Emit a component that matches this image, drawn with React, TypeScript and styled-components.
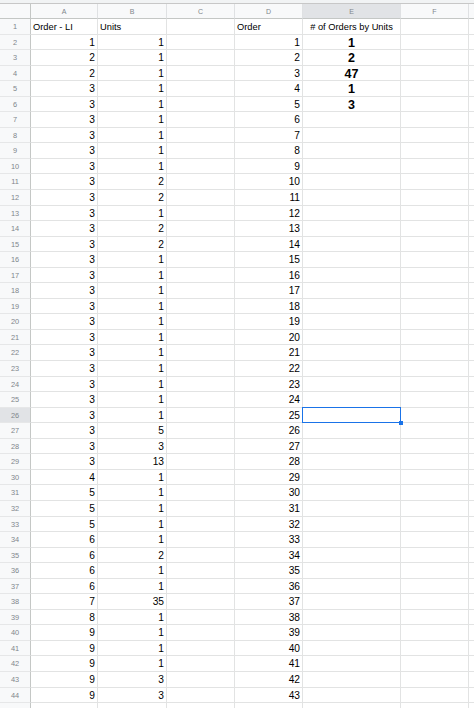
import React from "react";
import styled, { createGlobalStyle, css } from "styled-components";

const ROW_H = 15.56;

const GlobalStyle = createGlobalStyle`
  html, body {
    margin: 0;
    padding: 0;
    background: #ffffff;
    overflow: hidden;
  }
  body {
    font-family: "Liberation Sans", Arial, sans-serif;
  }
`;

const Page = styled.div`
  width: 474px;
  height: 708px;
  overflow: hidden;
  background: #f1f3f4;
  padding-top: 3px;
  box-sizing: border-box;
`;

const Sheet = styled.div`
  display: grid;
  grid-template-columns: 31px 67px 69px 68px 68px 98px 68px 60px;
  grid-template-rows: 15px;
  grid-auto-rows: ${ROW_H}px;
  border-top: 1px solid #c7c7c7;
  background: #ffffff;
`;

const Corner = styled.div`
  background: #f8f9fa;
  border-right: 1px solid #c4c7c5;
  border-bottom: 1px solid #c4c7c5;
  box-sizing: border-box;
`;

const ColHead = styled.div<{ $active?: boolean }>`
  background: ${(p) => (p.$active ? "#e1e3e6" : "#f8f9fa")};
  border-right: 1px solid #dfe1e3;
  border-bottom: 1px solid #c4c7c5;
  box-sizing: border-box;
  font-size: 7px;
  color: #80868b;
  text-align: center;
  line-height: 15px;
`;

const RowHead = styled.div<{ $active?: boolean }>`
  background: ${(p) => (p.$active ? "#e1e3e6" : "#f8f9fa")};
  border-right: 1px solid #c4c7c5;
  border-bottom: 1px solid #e6e7e8;
  box-sizing: border-box;
  font-size: 7.4px;
  color: #80868b;
  text-align: center;
  line-height: ${ROW_H}px;
`;

const Cell = styled.div<{
  $align?: "left" | "right" | "center";
  $bold?: boolean;
  $label?: boolean;
  $selected?: boolean;
}>`
  position: relative;
  border-right: 1px solid #e2e3e3;
  border-bottom: 1px solid #e2e3e3;
  box-sizing: border-box;
  padding: 1px 2px 0 2px;
  line-height: ${ROW_H - 1}px;
  white-space: nowrap;
  overflow: visible;
  color: #000000;
  text-align: ${(p) => p.$align || "left"};
  font-size: ${(p) => (p.$bold ? "12.5px" : p.$label ? "9.3px" : "10.2px")};
  font-weight: ${(p) => (p.$bold ? 700 : 400)};

  ${(p) =>
    p.$selected &&
    css`
      &::after {
        content: "";
        position: absolute;
        left: -1px;
        top: -1px;
        right: -1px;
        bottom: -1px;
        border: 1.5px solid #1a73e8;
        box-sizing: border-box;
      }
      &::before {
        content: "";
        position: absolute;
        right: -3px;
        bottom: -3px;
        width: 4px;
        height: 4px;
        background: #1a73e8;
        z-index: 2;
      }
    `}
`;

const COLS = ["A", "B", "C", "D", "E", "F", ""];

const colA = [
  1, 2, 2, 3, 3, 3, 3, 3, 3, 3, 3, 3, 3, 3, 3, 3, 3, 3, 3, 3, 3, 3, 3, 3, 3,
  3, 3, 3, 4, 5, 5, 5, 6, 6, 6, 6, 7, 8, 9, 9, 9, 9, 9,
];

const colB = [
  1, 1, 1, 1, 1, 1, 1, 1, 1, 2, 2, 1, 2, 2, 1, 1, 1, 1, 1, 1, 1, 1, 1, 1, 1,
  5, 3, 13, 1, 1, 1, 1, 1, 2, 1, 1, 35, 1, 1, 1, 1, 3, 3,
];

const colE: Record<number, number> = { 2: 1, 3: 2, 4: 47, 5: 1, 6: 3 };

const SELECTED_ROW = 26;

export default function App() {
  const rows = colA.map((a, i) => ({
    num: i + 2,
    a,
    b: colB[i],
    d: i + 1,
  }));

  return (
    <>
      <GlobalStyle />
      <Page>
        <Sheet>
          <Corner />
          {COLS.map((c, i) => (
            <ColHead key={i} $active={c === "E"}>
              {c}
            </ColHead>
          ))}

          {/* header row */}
          <RowHead>1</RowHead>
          <Cell $label>Order - LI</Cell>
          <Cell $label>Units</Cell>
          <Cell />
          <Cell $label>Order</Cell>
          <Cell $label $align="center">
            # of Orders by Units
          </Cell>
          <Cell />
          <Cell />

          {rows.map((r) => (
            <React.Fragment key={r.num}>
              <RowHead $active={r.num === SELECTED_ROW}>{r.num}</RowHead>
              <Cell $align="right">{r.a}</Cell>
              <Cell $align="right">{r.b}</Cell>
              <Cell />
              <Cell $align="right">{r.d}</Cell>
              <Cell
                $align="center"
                $bold
                $selected={r.num === SELECTED_ROW}
              >
                {colE[r.num] ?? ""}
              </Cell>
              <Cell />
              <Cell />
            </React.Fragment>
          ))}

          {/* partly visible last row */}
          <RowHead />
          <Cell />
          <Cell />
          <Cell />
          <Cell />
          <Cell />
          <Cell />
          <Cell />
        </Sheet>
      </Page>
    </>
  );
}
